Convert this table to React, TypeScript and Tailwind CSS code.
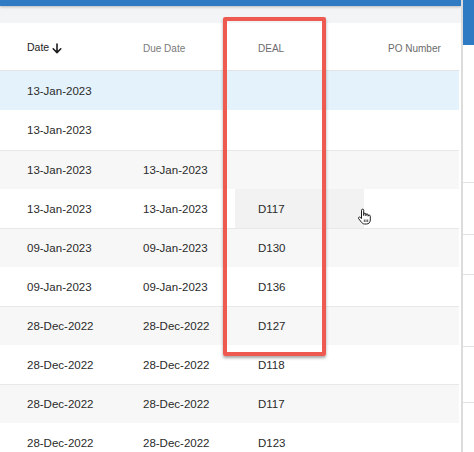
import React from "react";

type Row = { date: string; due: string; deal: string; bg: string; border: boolean; h: string; hoverDeal?: boolean };

const rows: Row[] = [
  { date: "13-Jan-2023", due: "", deal: "", bg: "bg-[#e4f2fc]", border: false, h: "h-[39px]" },
  { date: "13-Jan-2023", due: "", deal: "", bg: "bg-white", border: false, h: "h-[40px]" },
  { date: "13-Jan-2023", due: "13-Jan-2023", deal: "", bg: "bg-[#f7f7f7]", border: true, h: "h-[39px]" },
  { date: "13-Jan-2023", due: "13-Jan-2023", deal: "D117", bg: "bg-white", border: false, h: "h-[39px]", hoverDeal: true },
  { date: "09-Jan-2023", due: "09-Jan-2023", deal: "D130", bg: "bg-[#f7f7f7]", border: true, h: "h-[39px]" },
  { date: "09-Jan-2023", due: "09-Jan-2023", deal: "D136", bg: "bg-white", border: false, h: "h-[39px]" },
  { date: "28-Dec-2022", due: "28-Dec-2022", deal: "D127", bg: "bg-[#f7f7f7]", border: true, h: "h-[39px]" },
  { date: "28-Dec-2022", due: "28-Dec-2022", deal: "D118", bg: "bg-white", border: false, h: "h-[39px]" },
  { date: "28-Dec-2022", due: "28-Dec-2022", deal: "D117", bg: "bg-[#f7f7f7]", border: true, h: "h-[39px]" },
  { date: "28-Dec-2022", due: "28-Dec-2022", deal: "D123", bg: "bg-white", border: false, h: "h-[39px]" },
];

function HandCursor() {
  return (
    <svg width="15" height="17" viewBox="0 0 15 17" className="absolute left-[357px] top-[208px]">
      <path
        d="M4.5 9V2.3a1.1 1.1 0 0 1 2.2 0V7.5V6.3a1.1 1.1 0 0 1 2.2 0v1.4V7a1.1 1.1 0 0 1 2.2 0v1.2a1.1 1.1 0 0 1 2.2 0V12c0 2.4-1.6 4-3.8 4H7.6c-1.3 0-2.2-.6-3-1.6L1.6 10.6a1 1 0 0 1 1.5-1.3L4.5 10.6Z"
        fill="#ffffff"
        stroke="#1e1e1e"
        strokeWidth="1"
        strokeLinejoin="round"
      />
      <path d="M7.3 11.5v2.5M9 11.5v2.5M10.7 11.5v2.5" stroke="#1e1e1e" strokeWidth="0.8" />
    </svg>
  );
}

export default function App() {
  return (
    <div
      className="relative flex h-[452px] w-[474px] overflow-hidden bg-white"
      style={{ fontFamily: '"Liberation Sans", Arial, sans-serif' }}
    >
      {/* left panel */}
      <div className="flex w-[461px] shrink-0 flex-col overflow-hidden bg-white">
        <div className="relative z-10 h-[6px] w-full shrink-0 bg-[#2e7bc4] shadow-[0_1px_3px_rgba(0,0,0,0.25)]" />
        <div className="h-[17px] w-full shrink-0 bg-[#f3f4f6]" />
        {/* header */}
        <div className="grid h-[48px] w-[459px] shrink-0 grid-cols-[119px_116px_129px_1fr] items-center border-b border-[#e3e3e3] bg-white pt-[3px] text-[10px]">
          <div className="flex items-center gap-[3px] pl-[27px] text-[10.5px] font-medium text-[#1d1d1d]">
            <span>Date</span>
            <svg width="10" height="11" viewBox="0 0 10 11">
              <path d="M5 1v8.5M1.2 5.8 5 9.6l3.8-3.8" fill="none" stroke="#1d1d1d" strokeWidth="1.6" strokeLinecap="round" strokeLinejoin="round" />
            </svg>
          </div>
          <div className="pl-[24px] text-[#7a7a7a]">Due Date</div>
          <div className="pl-[23px] text-[#6b6b6b]">DEAL</div>
          <div className="pl-[24px] text-[#6b6b6b]">PO Number</div>
        </div>
        {rows.map((r, i) => (
          <div
            key={i}
            className={`grid w-[459px] shrink-0 grid-cols-[119px_116px_129px_1fr] text-[11.5px] text-[#2a2a2a] ${r.h} ${r.bg} ${r.border ? "border-t border-[#e8e8e8]" : ""}`}
          >
            <div className="flex items-center pl-[27px] pt-[2px]">{r.date}</div>
            <div className="flex items-center pl-[24px] pt-[2px]">{r.due}</div>
            <div className={`flex items-center pl-[23px] pt-[2px] ${r.hoverDeal ? "bg-[#f2f2f2]" : ""}`}>{r.deal}</div>
            <div />
          </div>
        ))}
      </div>
      {/* divider */}
      <div className="w-[2px] shrink-0 bg-[#dcdcdc]" />
      {/* right panel */}
      <div className="flex flex-1 flex-col overflow-hidden bg-white">
        <div className="h-[45px] shrink-0 bg-[#2e7bc4]" />
        <div className="h-[138px] shrink-0 border-b border-[#e2e2e2]" />
        <div className="h-[52px] shrink-0 border-b border-[#e2e2e2]" />
        <div className="h-[40px] shrink-0 border-b border-[#e2e2e2]" />
        <div className="h-[72px] shrink-0 border-b border-[#e2e2e2]" />
        <div className="h-[56px] shrink-0 border-b border-[#e2e2e2]" />
        <div className="flex-1" />
      </div>

      {/* red annotation box */}
      <div className="pointer-events-none absolute left-[223px] top-[17px] h-[339px] w-[103px] rounded-[2px] border-[4px] border-[#ef5a50] shadow-[0_2px_3px_rgba(0,0,0,0.35)]" />
      <HandCursor />
    </div>
  );
}
